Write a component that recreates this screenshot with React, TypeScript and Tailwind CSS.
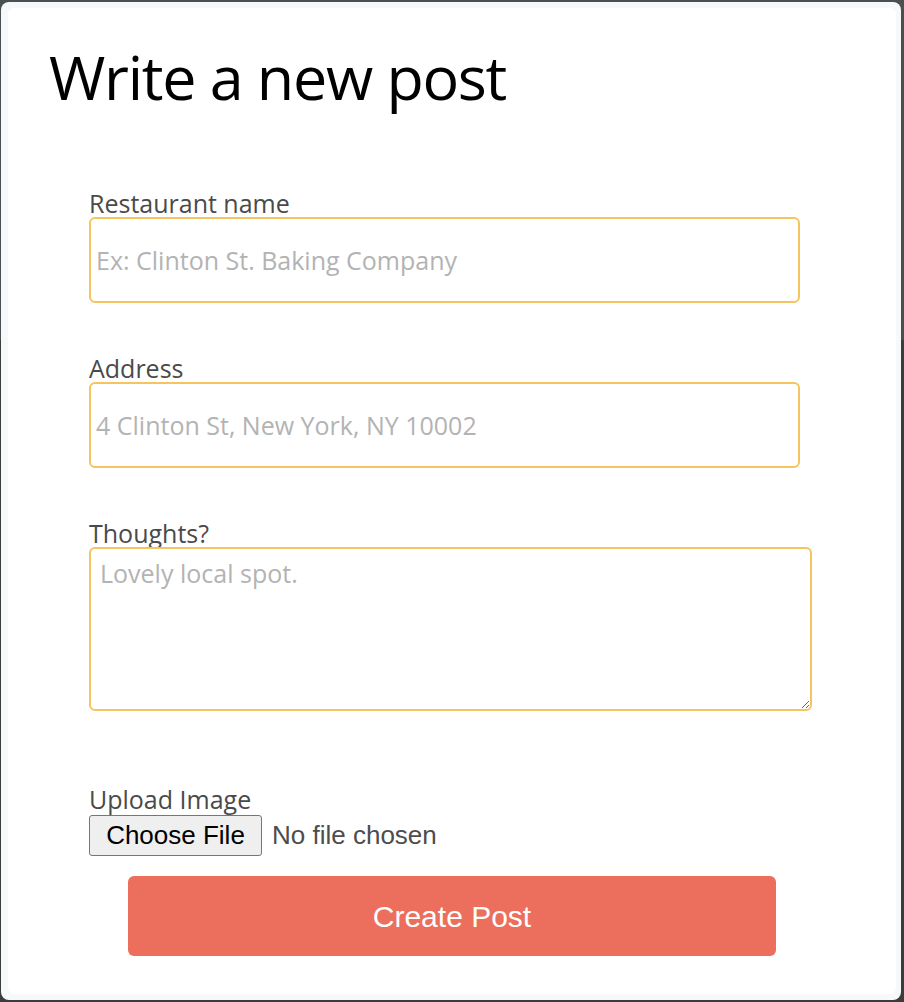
import React from "react";

const ui = { fontFamily: '"Open Sans", "Noto Sans", sans-serif' };
const arial = { fontFamily: '"Liberation Sans", Arial, sans-serif' };

export default function App() {
  return (
    <div className="relative w-[904px] h-[1002px] overflow-hidden bg-[#3d4442]">
      <div className="flex flex-col w-full h-full">
        <div className="h-[340px] bg-[#4a504f]" />
        <div className="flex-1 bg-[#393d3c]" />
      </div>
      <div className="absolute left-[1px] top-[2px] w-[900px] h-[998px] rounded-[8px] bg-[#f7f8f9] pl-[7px] pr-[5px] py-[6px]">
        <div className="w-full h-full rounded-[6px] bg-white flex flex-col" style={ui}>
          <h1 className="ml-[41px] mt-[38px] text-[61px] leading-none text-black tracking-[-1.3px]">
            Write a new post
          </h1>
          <form className="ml-[81px] mt-[86px] flex flex-col items-start">
            <label className="block text-[25px] leading-[20px] mb-[4px] text-[#4a4a4a]">Restaurant name</label>
            <input
              className="w-[711px] h-[86px] border-2 border-[#f5c45e] rounded-[6px] px-[5px] text-[25px] text-[#333] placeholder:text-[#b3b3b3] outline-none"
              placeholder="Ex: Clinton St. Baking Company"
            />
            <label className="block mt-[55px] text-[25px] leading-[20px] mb-[4px] text-[#4a4a4a]">Address</label>
            <input
              className="w-[711px] h-[86px] border-2 border-[#f5c45e] rounded-[6px] px-[5px] text-[25px] text-[#333] placeholder:text-[#b3b3b3] outline-none"
              placeholder="4 Clinton St, New York, NY 10002"
            />
            <label className="block mt-[55px] text-[25px] leading-[20px] mb-[4px] text-[#4a4a4a]">Thoughts?</label>
            <textarea
              className="block w-[723px] h-[164px] border-2 border-[#f5c45e] rounded-[6px] pl-[9px] pr-[10px] pt-[9px] text-[25px] leading-[30px] text-[#333] placeholder:text-[#b3b3b3] outline-none resize"
              placeholder="Lovely local spot."
            />
            <label className="block mt-[78px] text-[25px] leading-[20px] mb-[4px] text-[#4a4a4a]">Upload Image</label>
            <div className="flex items-center mt-[2px]" style={arial}>
              <span className="flex items-center justify-center w-[173px] h-[41px] border border-[#767676] rounded-[3px] bg-[#efefef] text-[26px] text-black">
                Choose File
              </span>
              <span className="ml-[10px] text-[26px] text-[#4d4d4d]">No file chosen</span>
            </div>
          </form>
          <div className="flex justify-center mt-[20px]">
            <button
              type="button"
              className="w-[648px] h-[80px] rounded-[6px] bg-[#eb6f5c] text-white text-[30px]"
              style={arial}
            >
              Create Post
            </button>
          </div>
        </div>
      </div>
    </div>
  );
}
